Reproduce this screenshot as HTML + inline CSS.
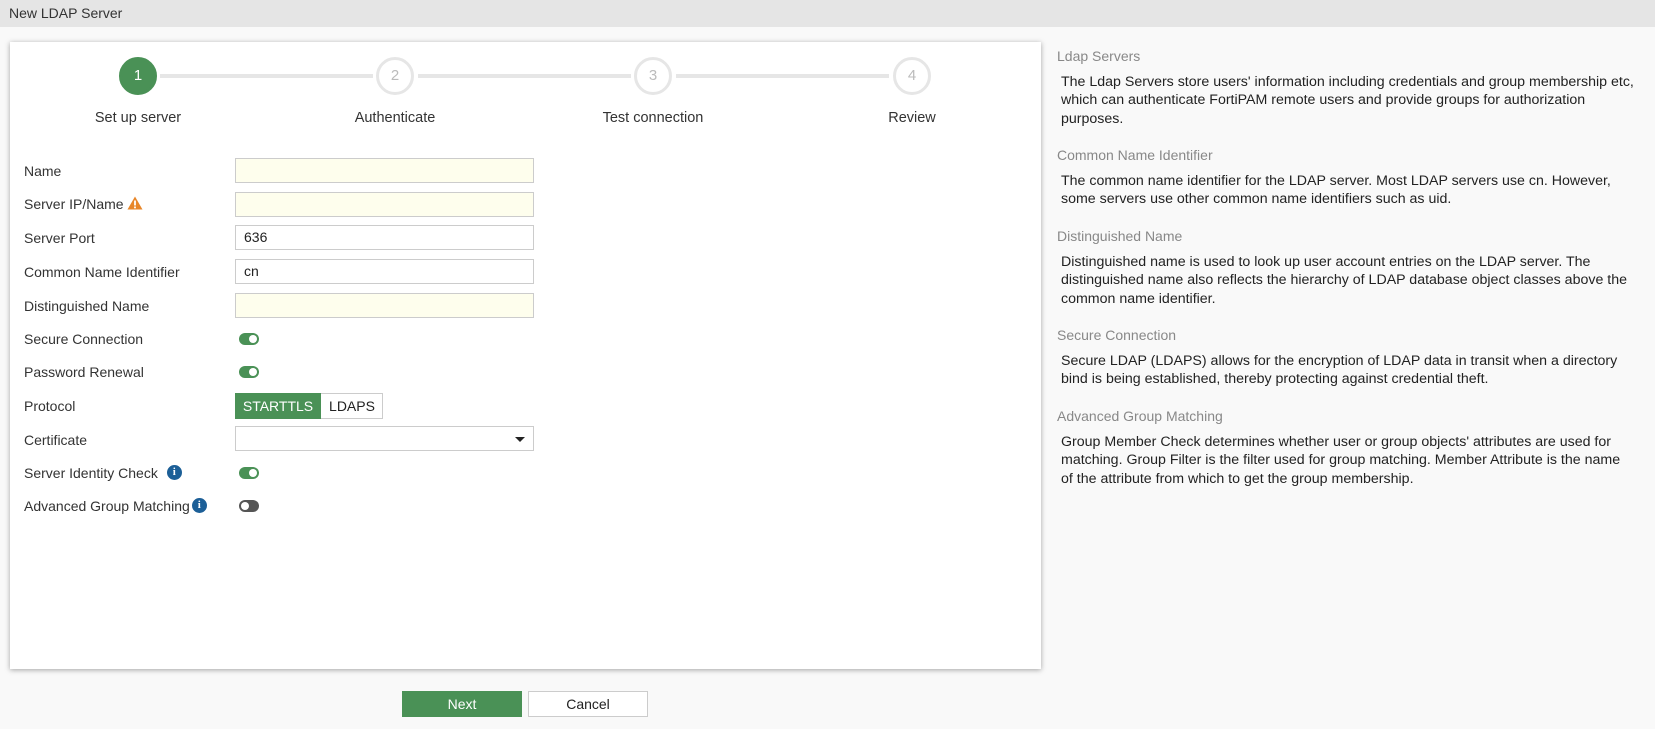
<!DOCTYPE html>
<html><head><meta charset="utf-8"><style>
*{box-sizing:border-box;margin:0;padding:0}
body{width:1655px;height:729px;background:#f9f9f9;font-family:"Liberation Sans",sans-serif;color:#222;position:relative;overflow:hidden}
.top{position:absolute;left:0;top:0;width:1655px;height:27px;background:#e5e5e5;font-size:14px;line-height:27px;padding-left:9px;color:#333}
.card{position:absolute;left:10px;top:42px;width:1031px;height:627px;background:#fff;box-shadow:0 1px 5px rgba(0,0,0,.35)}
.a{position:absolute}
.circ{position:absolute;width:38px;height:38px;border-radius:50%;border:3px solid #e6e6e6;background:#fff;color:#bbb;font-size:15px;text-align:center;line-height:32px}
.line{position:absolute;height:4px;background:#e6e6e6;top:74px}
.step{position:absolute;top:110px;font-size:14.5px;color:#333;width:200px;text-align:center}
.lbl{position:absolute;left:24px;font-size:14px;color:#333;line-height:18px}
.inp{position:absolute;left:235px;width:299px;height:25px;border:1px solid #ccc;font-size:14px;line-height:23px;padding-left:8px;background:#fff}
.y{background:#fefeed}
.tg{position:absolute;left:239px;width:20px;height:12px;border-radius:6px;background:#4a9156}
.tg::after{content:"";position:absolute;right:2px;top:2px;width:8px;height:8px;border-radius:50%;background:#fff}
.tg.off{background:#555}.tg.off::after{left:2px;right:auto}
.info{display:inline-block;width:15px;height:15px;border-radius:50%;background:#1c5f97;color:#fff;font-size:11px;font-weight:bold;text-align:center;line-height:15px;font-family:"Liberation Serif",serif;vertical-align:top;margin-top:1px;margin-left:5px}
.h{position:absolute;left:1057px;font-size:14px;color:#888}
.t{position:absolute;left:1061px;font-size:14.2px;color:#222;line-height:18.3px;white-space:nowrap}
</style></head><body>
<div class="top">New LDAP Server</div>
<div class="card"></div>
<div class="line" style="left:160px;width:213px"></div>
<div class="line" style="left:418px;width:213px"></div>
<div class="line" style="left:676px;width:213px"></div>
<div class="circ" style="left:119px;top:57px;background:#4a9156;border-color:#4a9156;color:#fff">1</div>
<div class="circ" style="left:376px;top:57px">2</div>
<div class="circ" style="left:634px;top:57px">3</div>
<div class="circ" style="left:893px;top:57px">4</div>
<div class="step" style="left:38px">Set up server</div>
<div class="step" style="left:295px">Authenticate</div>
<div class="step" style="left:553px">Test connection</div>
<div class="step" style="left:812px">Review</div>

<div class="lbl" style="top:162px">Name</div>
<div class="inp y" style="top:158px"></div>
<div class="lbl" style="top:195px">Server IP/Name <svg width="16" height="14" viewBox="0 0 16 14" style="vertical-align:-1px"><path d="M8 0.5L15.5 13.5H0.5Z" fill="#e8872a"/><rect x="7.1" y="4.5" width="1.8" height="5" fill="#fff"/><rect x="7.1" y="10.5" width="1.8" height="1.8" fill="#fff"/></svg></div>
<div class="inp y" style="top:192px"></div>
<div class="lbl" style="top:229px">Server Port</div>
<div class="inp" style="top:225px">636</div>
<div class="lbl" style="top:263px">Common Name Identifier</div>
<div class="inp" style="top:259px">cn</div>
<div class="lbl" style="top:297px">Distinguished Name</div>
<div class="inp y" style="top:293px"></div>
<div class="lbl" style="top:330px">Secure Connection</div>
<div class="tg" style="top:333px"></div>
<div class="lbl" style="top:363px">Password Renewal</div>
<div class="tg" style="top:366px"></div>
<div class="lbl" style="top:397px">Protocol</div>
<div class="a" style="left:235px;top:393px;width:148px;height:26px;border:1px solid #ccc;font-size:14px;line-height:24px">
<span style="position:absolute;left:-1px;top:-1px;width:86px;height:26px;background:#4a9156;color:#fff;text-align:center;line-height:26px">STARTTLS</span>
<span style="position:absolute;left:85px;width:62px;text-align:center">LDAPS</span></div>
<div class="lbl" style="top:431px">Certificate</div>
<div class="inp" style="top:426px"><span style="position:absolute;right:8px;top:10px;width:0;height:0;border-left:5px solid transparent;border-right:5px solid transparent;border-top:5px solid #222"></span></div>
<div class="lbl" style="top:464px">Server Identity Check <span class="info">i</span></div>
<div class="tg" style="top:467px"></div>
<div class="lbl" style="top:497px">Advanced Group Matching<span class="info" style="margin-left:2px">i</span></div>
<div class="tg off" style="top:500px"></div>

<div class="a" style="left:402px;top:691px;width:120px;height:26px;background:#4a9156;color:#fff;font-size:14px;text-align:center;line-height:26px">Next</div>
<div class="a" style="left:528px;top:691px;width:120px;height:26px;background:#fff;border:1px solid #ccc;color:#222;font-size:14px;text-align:center;line-height:24px">Cancel</div>

<div class="h" style="top:48px">Ldap Servers</div>
<div class="t" style="top:73px">The Ldap Servers store users' information including credentials and group membership etc,<br>which can authenticate FortiPAM remote users and provide groups for authorization<br>purposes.</div>
<div class="h" style="top:147px">Common Name Identifier</div>
<div class="t" style="top:172px">The common name identifier for the LDAP server. Most LDAP servers use cn. However,<br>some servers use other common name identifiers such as uid.</div>
<div class="h" style="top:228px">Distinguished Name</div>
<div class="t" style="top:253px">Distinguished name is used to look up user account entries on the LDAP server. The<br>distinguished name also reflects the hierarchy of LDAP database object classes above the<br>common name identifier.</div>
<div class="h" style="top:327px">Secure Connection</div>
<div class="t" style="top:352px">Secure LDAP (LDAPS) allows for the encryption of LDAP data in transit when a directory<br>bind is being established, thereby protecting against credential theft.</div>
<div class="h" style="top:408px">Advanced Group Matching</div>
<div class="t" style="top:433px">Group Member Check determines whether user or group objects' attributes are used for<br>matching. Group Filter is the filter used for group matching. Member Attribute is the name<br>of the attribute from which to get the group membership.</div>
</body></html>
